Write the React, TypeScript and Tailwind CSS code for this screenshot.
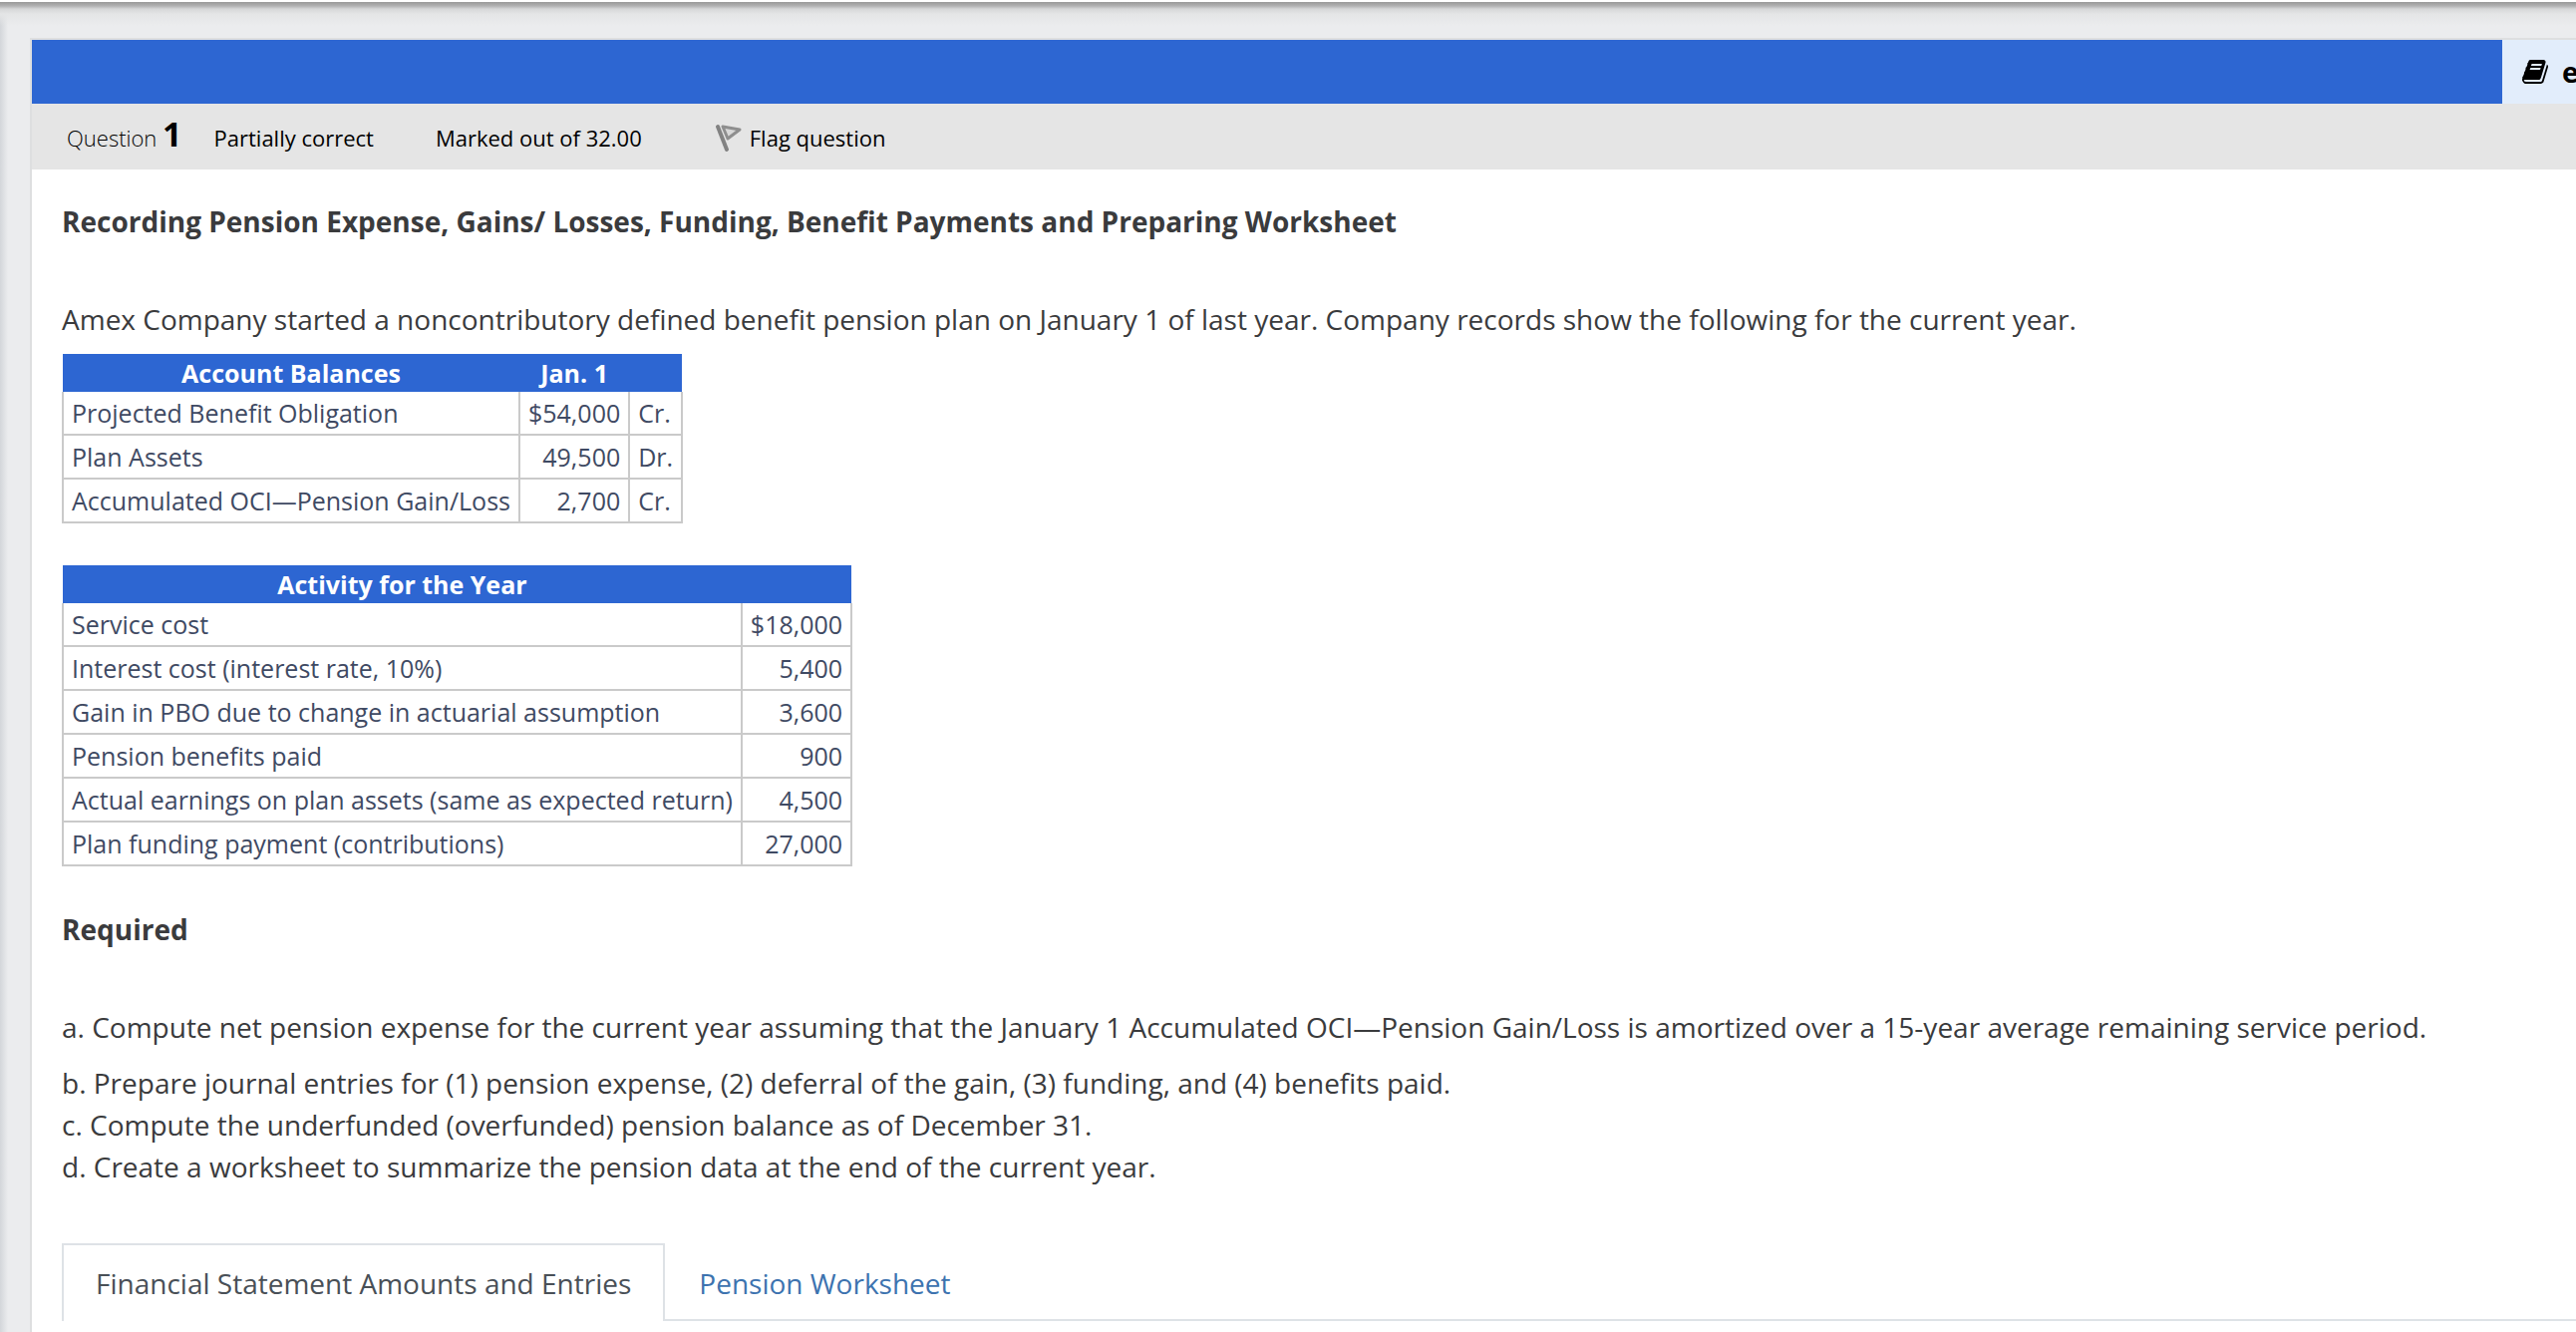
import type { ReactNode } from 'react'

const accountBalances = [
  { account: 'Projected Benefit Obligation', amount: '$54,000', side: 'Cr.' },
  { account: 'Plan Assets', amount: '49,500', side: 'Dr.' },
  { account: 'Accumulated OCI—Pension Gain/Loss', amount: '2,700', side: 'Cr.' },
]

const activity = [
  { label: 'Service cost', amount: '$18,000' },
  { label: 'Interest cost (interest rate, 10%)', amount: '5,400' },
  { label: 'Gain in PBO due to change in actuarial assumption', amount: '3,600' },
  { label: 'Pension benefits paid', amount: '900' },
  { label: 'Actual earnings on plan assets (same as expected return)', amount: '4,500' },
  { label: 'Plan funding payment (contributions)', amount: '27,000' },
]

function BookIcon() {
  return (
    <svg viewBox="0 0 1792 1792" className="size-7 shrink-0" fill="currentColor" aria-hidden="true">
      <path d="M1639 478q40 57 18 129l-275 906q-19 64-76.5 107.5t-122.5 43.5h-923q-77 0-148.5-53.5t-99.5-131.5q-24-67-2-127 0-4 3-27t4-37q1-8-3-21.5t-3-19.5q2-11 8-21t16.5-23.5 16.5-23.5q23-38 45-91.5t30-91.5q3-10 .5-30t-.5-28q3-11 17-28t17-23q21-36 42-92t25-90q1-9-2.5-32t.5-28q4-13 22-30.5t22-22.5q19-26 42.5-84.5t27.5-96.5q1-8-3-25.5t-2-26.5q2-8 9-18t18-23 17-21q8-12 16.5-30.5t15-35 16-36 19.5-32 26.5-23.5 36-11.5 47.5 5.5l-1 3q38-9 51-9h761q74 0 114 56t18 130l-274 906q-36 119-71.5 153.5t-128.5 34.5h-869q-27 0-38 15-11 16-1 43 24 70 144 70h923q29 0 56-15.5t35-41.5l300-987q7-22 5-57 38 15 59 43zm-1064 2q-4 13 2 22.5t20 9.5h608q13 0 25.5-9.5t16.5-22.5l21-64q4-13-2-22.5t-20-9.5h-608q-13 0-25.5 9.5t-16.5 22.5zm-83 256q-4 13 2 22.5t20 9.5h608q13 0 25.5-9.5t16.5-22.5l21-64q4-13-2-22.5t-20-9.5h-608q-13 0-25.5 9.5t-16.5 22.5z" />
    </svg>
  )
}

function FlagIcon() {
  return (
    <svg viewBox="0 0 32 32" className="size-8 shrink-0" fill="none" aria-hidden="true">
      <path d="M4 5 L13 28" stroke="#828282" strokeWidth="4" strokeLinecap="round" />
      <path d="M9 5 L26 8 L14 17 Z" fill="#d8d8d8" stroke="#8e8e8e" strokeWidth="3" strokeLinejoin="round" />
    </svg>
  )
}

function DataTable({ head, children }: { head: string[]; children: ReactNode }) {
  return (
    <table className="border-collapse text-[25px] leading-[34px] text-[#3f4a63]">
      <thead>
        <tr className="bg-[#2d66d2] text-white">
          {head.map((title, i) => (
            <th key={i} className="h-[38px] px-2 py-0 text-center font-bold">
              {title}
            </th>
          ))}
        </tr>
      </thead>
      <tbody>{children}</tbody>
    </table>
  )
}

function Cell({ right, children }: { right?: boolean; children: ReactNode }) {
  return (
    <td className={`border-2 border-t-0 border-[#cacaca] px-2 py-1 ${right ? 'text-right' : 'text-left'}`}>
      {children}
    </td>
  )
}

function QuestionBar() {
  return (
    <div className="flex h-[66px] items-center bg-[#e5e5e5] pt-0.5 pl-[35px] text-[22px] leading-8 text-black">
      <h2 className="mr-8 font-light">
        Question <span className="text-[34px] leading-0 font-bold">1</span>
      </h2>
      <span className="mr-[62px]">Partially correct</span>
      <span className="mr-[72px]">Marked out of 32.00</span>
      <button type="button" className="flex items-center gap-1">
        <FlagIcon />
        Flag question
      </button>
    </div>
  )
}

export default function App() {
  return (
    <div className="min-h-screen overflow-hidden border-t-2 border-white bg-[#ebecee] font-['Open_Sans','Noto_Sans',sans-serif] text-[28px] leading-[42px] text-[#3a3b3d]">
      <div className="min-h-screen bg-linear-to-r from-[#d3d6da] to-transparent to-[8px]">
        <div className="h-9 bg-[linear-gradient(#989898_0px,#b2b2b3_4px,#d6d7d8_7px,#e4e5e6_12px,transparent_24px)]" />
        <main className="ml-[30px] min-h-screen border-t-2 border-l-2 border-[#dedfe0] bg-white">
          <div className="flex h-16 bg-[#2d66d2]">
            <a
              href="#ebook"
              className="ml-auto flex w-[74px] items-center gap-3 overflow-hidden bg-[#e2edfb] pl-5 font-bold whitespace-nowrap text-black"
            >
              <BookIcon />
              eBook
            </a>
          </div>
          <QuestionBar />

          <div className="pt-[31px] pl-[30px]">
            <h1 className="font-bold">
              Recording Pension Expense, Gains/ Losses, Funding, Benefit Payments and Preparing Worksheet
            </h1>
            <p className="mt-14 mb-[14px]">
              Amex Company started a noncontributory defined benefit pension plan on January 1 of last year. Company
              records show the following for the current year.
            </p>

            <DataTable head={['Account Balances', 'Jan. 1', '']}>
              {accountBalances.map((row) => (
                <tr key={row.account}>
                  <Cell>{row.account}</Cell>
                  <Cell right>{row.amount}</Cell>
                  <Cell>{row.side}</Cell>
                </tr>
              ))}
            </DataTable>

            <div className="mt-[42px]">
              <DataTable head={['Activity for the Year', '']}>
                {activity.map((row) => (
                  <tr key={row.label}>
                    <Cell>{row.label}</Cell>
                    <Cell right>{row.amount}</Cell>
                  </tr>
                ))}
              </DataTable>
            </div>

            <h2 className="mt-[42px] font-bold">Required</h2>
            <p className="mt-14">
              a. Compute net pension expense for the current year assuming that the January 1 Accumulated OCI—Pension
              Gain/Loss is amortized over a 15-year average remaining service period.
            </p>
            <p className="mt-[14px]">
              b. Prepare journal entries for (1) pension expense, (2) deferral of the gain, (3) funding, and (4) benefits
              paid.
              <br />
              c. Compute the underfunded (overfunded) pension balance as of December 31.
              <br />
              d. Create a worksheet to summarize the pension data at the end of the current year.
            </p>

            <div role="tablist" className="mt-14 flex h-[78px] items-stretch">
              <button
                type="button"
                role="tab"
                aria-selected="true"
                className="border-2 border-b-0 border-[#dee2e6] px-8 text-[#495057]"
              >
                Financial Statement Amounts and Entries
              </button>
              <div className="flex flex-1 border-b-2 border-[#dee2e6] pt-1">
                <button type="button" role="tab" aria-selected="false" className="px-[34px] text-[#3d73af]">
                  Pension Worksheet
                </button>
              </div>
            </div>
          </div>
        </main>
      </div>
    </div>
  )
}
